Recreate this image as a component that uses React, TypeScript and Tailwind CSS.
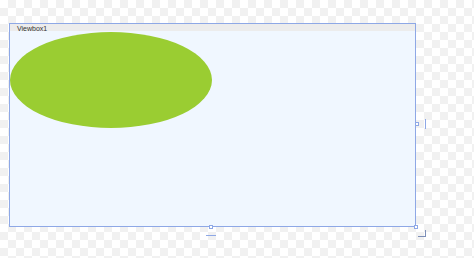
export default function App() {
  return (
    <div
      className="w-[474px] h-[258px] overflow-hidden bg-[conic-gradient(#f1f1f1_25%,#ffffff_0_50%,#f1f1f1_0_75%,#ffffff_0)] bg-[length:16px_16px] pt-[23px] pl-[9px]"
      style={{ fontFamily: '"Liberation Sans", Arial, sans-serif' }}
    >
      <div className="relative w-[407px] h-[204px]">
        {/* Viewbox frame */}
        <div className="w-full h-full border border-[#8ea8e6] bg-[#f0f7ff] flex flex-col">
          <div className="h-[7px] bg-[#ececec] flex items-center pl-[7px]">
            <span className="text-[7px] leading-none text-[#333] relative top-[1px]">Viewbox1</span>
          </div>
          <svg width="405" height="195" className="block">
            <ellipse cx="101" cy="49" rx="101" ry="48" fill="#9acd32" />
          </svg>
        </div>

        {/* Resize handles */}
        <div className="absolute left-[406px] top-[99px] w-[4px] h-[4px] border border-[#8ea8e6] bg-white" />
        <div className="absolute left-[416px] top-[96px] w-[1px] h-[10px] bg-[#8ea8e6]" />

        <div className="absolute left-[200px] top-[202px] w-[4px] h-[4px] border border-[#8ea8e6] bg-white" />
        <div className="absolute left-[197px] top-[212px] w-[10px] h-[1px] bg-[#8ea8e6]" />

        <div className="absolute left-[405px] top-[202px] w-[4px] h-[4px] border border-[#8ea8e6] bg-white" />
        <div className="absolute left-[409px] top-[207px] w-[8px] h-[7px] border-r border-b border-[#7d8fb8]" />
      </div>
    </div>
  );
}
